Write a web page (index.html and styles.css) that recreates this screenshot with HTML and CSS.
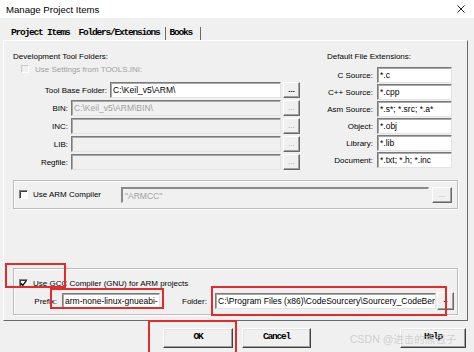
FILE: index.html
```html
<!DOCTYPE html>
<html lang="en">

<head>
	<meta charset="UTF-8">
	<meta name="viewport" content="width=device-width, initial-scale=1.0">
	<title>Manage Project Items</title>
	<link rel="stylesheet" href="styles.css">
</head>

<body>
	<div class="dialog">
		<div class="titlebar">
			<span class="title">Manage Project Items</span>
			<svg class="close" width="8" height="8" viewBox="0 0 8 8">
				<path d="M0.5 0.5 L7.5 7.5 M7.5 0.5 L0.5 7.5" stroke="#222" stroke-width="1" fill="none" />
			</svg>
		</div>

		<div class="tabs">
			<span class="tab tab-first">Project Items</span>
			<span class="tab active">Folders/Extensions</span>
			<span class="tab tab-last">Books</span>
		</div>

		<div class="page">
			<div class="top">
				<div class="folders">
					<div class="heading">Development Tool Folders:</div>
					<div class="check check-ini disabled"><span class="box"></span>Use Settings from TOOLS.INI:</div>
					<div class="rows">
						<div class="row">
							<span class="lbl lbl-base">Tool Base Folder:</span>
							<span class="field">C:\Keil_v5\ARM\</span>
							<span class="dots">...</span>
						</div>
						<div class="row">
							<span class="lbl">BIN:</span>
							<span class="field off">C:\Keil_v5\ARM\BIN\</span>
							<span class="dots off">...</span>
						</div>
						<div class="row">
							<span class="lbl">INC:</span>
							<span class="field off"></span>
							<span class="dots off">...</span>
						</div>
						<div class="row">
							<span class="lbl">LIB:</span>
							<span class="field off"></span>
							<span class="dots off">...</span>
						</div>
						<div class="row">
							<span class="lbl">Regfile:</span>
							<span class="field off"></span>
							<span class="dots off">...</span>
						</div>
					</div>
				</div>

				<div class="exts">
					<div class="heading">Default File Extensions:</div>
					<div class="ext-rows">
						<div class="row"><span class="lbl">C Source:</span><span class="field">*.c</span></div>
						<div class="row"><span class="lbl">C++ Source:</span><span class="field">*.cpp</span></div>
						<div class="row"><span class="lbl">Asm Source:</span><span class="field">*.s*; *.src; *.a*</span></div>
						<div class="row"><span class="lbl">Object:</span><span class="field">*.obj</span></div>
						<div class="row"><span class="lbl">Library:</span><span class="field">*.lib</span></div>
						<div class="row"><span class="lbl">Document:</span><span class="field">*.txt; *.h; *.inc</span></div>
					</div>
				</div>
			</div>

			<div class="group arm">
				<div class="check check-arm"><span class="box"></span>Use ARM Compiler</div>
				<span class="field off armcc">"ARMCC"</span>
				<span class="dots off wide">...</span>
			</div>

			<div class="group gcc">
				<div class="check"><span class="box">
					<svg width="7" height="7" viewBox="0 0 7 7">
						<path d="M0.8 3.2 L2.7 5.4 L6.2 0.8" stroke="#000" stroke-width="1.4" fill="none" />
					</svg>
				</span>Use GCC Compiler (GNU) for ARM projects</div>
				<div class="gcc-row">
					<span class="lbl lbl-prefix">Prefix:</span>
					<span class="field prefix">arm-none-linux-gnueabi-</span>
					<span class="lbl lbl-folder">Folder:</span>
					<span class="field folder">C:\Program Files (x86)\CodeSourcery\Sourcery_CodeBench_Lite</span>
					<span class="dots folder-dots">..</span>
				</div>
			</div>
		</div>

		<div class="buttons">
			<span class="button ok">OK</span>
			<span class="button cancel">Cancel</span>
			<span class="button help">Help</span>
		</div>

		<div class="mark mark-check"></div>
		<div class="mark mark-prefix"></div>
		<div class="mark mark-folder"></div>
		<div class="mark mark-ok"></div>
		<div class="watermark">CSDN @进击的熊包子</div>
	</div>
</body>

</html>
```

FILE: styles.css
```css
* {
	box-sizing: border-box;
}

body {
	margin: 0;
	background-color: #f0f0f0;
	font-family: "Liberation Sans", Arial, sans-serif;
	font-size: 8px;
	color: #000;
}

.dialog {
	position: relative;
	width: 474px;
	height: 352px;
	overflow: hidden;
}

/* title bar */
.titlebar {
	display: flex;
	align-items: center;
	justify-content: space-between;
	height: 18px;
	padding: 0 9px 0 6px;
	background-color: #fff;
}

.title {
	font-size: 9.6px;
}

/* tabs */
.tabs {
	display: flex;
	align-items: flex-end;
	height: 22px;
	padding-left: 8px;
}

.tab {
	font-family: "Liberation Mono", monospace;
	font-weight: bold;
	font-size: 9.5px;
	letter-spacing: -1.2px;
	height: 13px;
	line-height: 11px;
	padding: 0 5px 2px 4px;
	white-space: nowrap;
}

.tab-first {
	padding-left: 3px;
}

.active,
.tab-last {
	border-right: 1px solid #696969;
}

.tab-last {
	padding-right: 8px;
}

/* tab page */
.page {
	width: 465px;
	height: 281px;
	margin-left: 3px;
	padding: 11px 9px 0 9px;
	border: 1px solid;
	border-color: #fff #696969 #696969 #fff;
}

.top {
	display: flex;
}

.heading {
	height: 10px;
	line-height: 10px;
	white-space: nowrap;
}

.folders {
	width: 287px;
}

.exts {
	width: 132px;
	margin-left: auto;
	margin-right: 6px;
}

.exts .heading {
	padding-left: 7px;
}

.check {
	display: flex;
	align-items: center;
	height: 10px;
	white-space: nowrap;
}

.check .box {
	display: flex;
	align-items: center;
	justify-content: center;
	width: 9px;
	height: 9px;
	margin-right: 5px;
	background-color: #fff;
	border: 1px solid;
	border-color: #808080 #fff #fff #808080;
	box-shadow: inset 1px 1px 0 #404040;
}

.check-ini {
	margin-top: 2px;
	padding-left: 8px;
}

.disabled {
	color: #a0a0a0;
}

.disabled .box {
	width: 8px;
	height: 8px;
	margin-right: 6px;
	background-color: #f0f0f0;
	border-color: #c8c8c8 #fff #fff #c8c8c8;
	box-shadow: none;
}

.rows {
	display: flex;
	flex-direction: column;
	gap: 2px;
	margin-top: 8px;
}

.ext-rows {
	display: flex;
	flex-direction: column;
	gap: 1px;
	margin-top: 5px;
}

.row {
	display: flex;
	align-items: center;
	height: 16px;
}

.lbl {
	flex-shrink: 0;
	width: 55px;
	margin-right: 3px;
	text-align: right;
	white-space: nowrap;
}

.lbl-base {
	width: 94px;
}

.exts .lbl {
	width: 53px;
	margin-right: 4px;
}

.field {
	flex: 1;
	height: 16px;
	padding-left: 2px;
	line-height: 14px;
	font-size: 8.5px;
	white-space: nowrap;
	overflow: hidden;
	background-color: #fff;
	border: 1px solid;
	border-color: #7a7a7a #e3e3e3 #e3e3e3 #7a7a7a;
	box-shadow: inset 1px 1px 0 #a8a8a8;
}

.field.off {
	background-color: #f0f0f0;
	color: #a0a0a0;
}

.dots {
	flex-shrink: 0;
	width: 17px;
	height: 16px;
	margin-left: 2px;
	text-align: center;
	line-height: 13px;
	font-weight: bold;
	font-size: 8px;
	background-color: #f0f0f0;
	border: 1px solid;
	border-color: #fff #696969 #696969 #fff;
	box-shadow: inset -1px -1px 0 #a0a0a0;
}

.dots.off {
	color: #a0a0a0;
	font-weight: normal;
}

/* compiler groups */
.group {
	border: 1px solid #bcbcbc;
	box-shadow: 1px 1px 0 #fff, inset 1px 1px 0 #fff;
}

.arm {
	display: flex;
	align-items: center;
	height: 29px;
	margin-top: 10px;
	padding: 0 5px;
}

.check-arm {
	width: 102px;
	flex-shrink: 0;
}

.armcc {
	flex: none;
	width: 308px;
	border-width: 2px 1px 1px 2px;
	border-color: #8a8a8a #f0f0f0 #f0f0f0 #8a8a8a;
	box-shadow: none;
}

.dots.wide {
	width: 20px;
	margin-left: 3px;
}

.gcc {
	height: 47px;
	margin-top: 59px;
	padding: 9px 3px 0 5px;
}

.gcc-row {
	display: flex;
	align-items: center;
	height: 16px;
	margin-top: 5px;
}

.lbl-prefix {
	width: 38px;
	margin-right: 5px;
}

.prefix {
	flex: none;
	width: 98px;
}

.lbl-folder {
	width: 25px;
	margin-left: 22px;
	margin-right: 8px;
	text-align: left;
}

.folder {
	flex: none;
	width: 221px;
}

.folder-dots {
	width: 17px;
	height: 18px;
	margin-left: 1px;
	line-height: 14px;
}

/* dialog buttons */
.buttons {
	display: flex;
	height: 20px;
	margin-top: 7px;
}

.button {
	height: 20px;
	line-height: 16px;
	text-align: center;
	font-family: "Liberation Mono", monospace;
	font-weight: bold;
	font-size: 9.5px;
	letter-spacing: -1.2px;
	background-color: #f0f0f0;
	border: 1px solid;
	border-color: #fff #404040 #404040 #fff;
	box-shadow: inset -1px -1px 0 #a0a0a0, inset 1px 1px 0 #e3e3e3;
}

.ok {
	width: 70px;
	margin-left: 163px;
}

.cancel {
	width: 69px;
	margin-left: 9px;
}

.help {
	width: 66px;
	margin-left: 89px;
}

/* annotations drawn over the screenshot */
.mark {
	position: absolute;
	border: 2px solid #e22b2b;
}

.mark-check {
	left: 5px;
	top: 263px;
	width: 61px;
	height: 25px;
}

.mark-prefix {
	left: 50px;
	top: 288px;
	width: 114px;
	height: 21px;
}

.mark-folder {
	left: 211px;
	top: 286px;
	width: 236px;
	height: 30px;
}

.mark-ok {
	left: 148px;
	top: 320px;
	width: 89px;
	height: 36px;
}

.watermark {
	position: absolute;
	left: 350px;
	top: 331px;
	font-family: "Liberation Sans", "Noto Sans CJK SC", sans-serif;
	font-size: 10.5px;
	color: rgba(200, 200, 200, 0.85);
	white-space: nowrap;
}
```
